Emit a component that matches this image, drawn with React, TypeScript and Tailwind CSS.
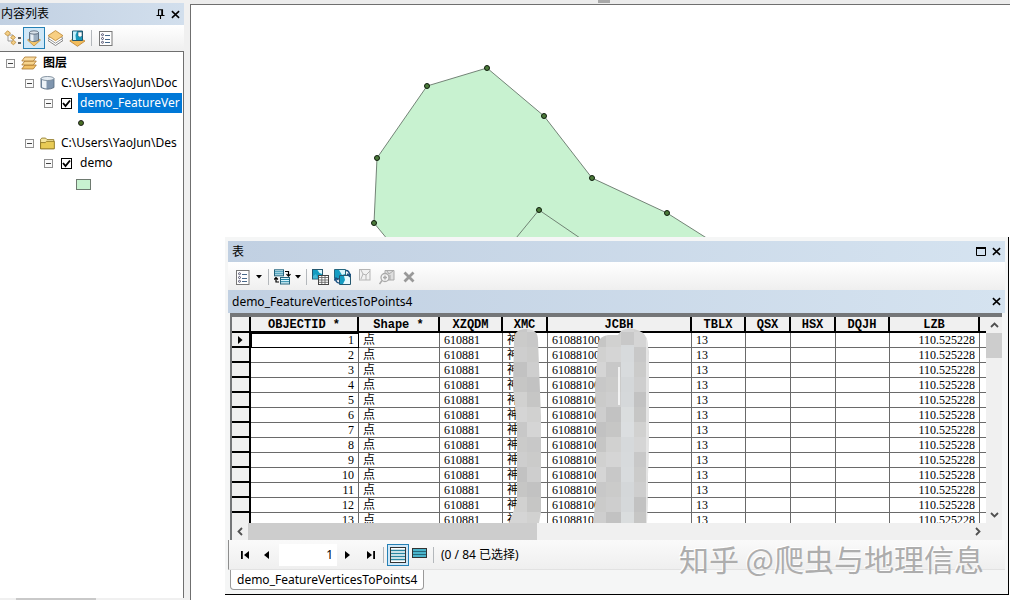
import { useState, type ReactNode } from "react";

const columns = [
  { key: "OBJECTID *", width: "w-[108px]" },
  { key: "Shape *", width: "w-[81px]" },
  { key: "XZQDM", width: "w-[63px]" },
  { key: "XMC", width: "w-[45px]" },
  { key: "JCBH", width: "w-[144px]" },
  { key: "TBLX", width: "w-[54px]" },
  { key: "QSX", width: "w-[45px]" },
  { key: "HSX", width: "w-[45px]" },
  { key: "DQJH", width: "w-[54px]" },
  { key: "LZB", width: "w-[90px]" },
];

const rows = Array.from({ length: 13 }, (_, i) => ({
  id: i + 1,
  shape: "点",
  xzqdm: "610881",
  xmc: "神",
  jcbh: "61088100",
  tblx: "13",
  lzb: "110.525228",
}));

const vertices = [
  [374, 223],
  [377, 158],
  [427, 86],
  [487, 68],
  [544, 116],
  [592, 178],
  [667, 213],
  [539, 210],
];

const cell = "border-r border-b border-[#6a6a6a] px-1 pt-px";

function Divider() {
  return <span className="h-4 w-px shrink-0 bg-[#b4b8bc]" />;
}

function IconButton({ label, className = "", children }: { label: string; className?: string; children: ReactNode }) {
  return (
    <button aria-label={label} className={`flex shrink-0 items-center justify-center ${className}`}>
      {children}
    </button>
  );
}

function CloseIcon() {
  return (
    <svg width="9" height="9" viewBox="0 0 10 10" fill="none" stroke="#000" strokeWidth="1.7">
      <path d="M1 1.2l8 7.6M9 1.2L1 8.8" />
    </svg>
  );
}

function ListIcon() {
  return (
    <svg width="14" height="15" viewBox="0 0 14 15" fill="none">
      <rect x=".5" y=".5" width="12.5" height="14" fill="#fff" stroke="#777" />
      <circle cx="3.5" cy="3.7" r="1" stroke="#335" strokeWidth=".8" />
      <circle cx="3.5" cy="7.5" r="1" stroke="#335" strokeWidth=".8" />
      <circle cx="3.5" cy="11.3" r="1" stroke="#335" strokeWidth=".8" />
      <path d="M6 4.5h5M6 8.5h5M6 11.5h5" stroke="#47688a" />
    </svg>
  );
}

function DrawingOrderIcon() {
  return (
    <svg width="17" height="16" viewBox="0 0 17 16" fill="none">
      <path d="M4 5v6h4M5 5h4v8" stroke="#999" />
      <path d="M3.5.8l3 2.2-2.7 3L.8 3.7z" fill="#f4cf86" stroke="#c79a4c" />
      <path d="M9 5.3l2.4 2-2.2 2.4-2.6-2z" fill="#f4cf86" stroke="#c79a4c" />
      <path d="M9.5 10.3l2.4 2-2.4 2.5-2.6-2.2z" fill="#f4cf86" stroke="#c79a4c" />
      <path d="M14 8h3M14 13h3" stroke="#333" strokeWidth="1.6" />
    </svg>
  );
}

function SourceIcon() {
  return (
    <svg width="16" height="17" viewBox="0 0 16 17">
      <path d="M1.5 10L8 16l6.5-6L11 8H5z" fill="#f3c66c" stroke="#c28d38" strokeWidth=".8" />
      <path d="M3.5 2.5v8q4.5 2.3 9 0v-8z" fill="#9baec0" stroke="#4d5c6e" strokeWidth=".8" />
      <path d="M4.5 3v7.5q1.5.7 3 .8V3z" fill="#e9f0f6" />
      <ellipse cx="8" cy="2.5" rx="4.5" ry="1.7" fill="#d9e2ea" stroke="#4d5c6e" strokeWidth=".8" />
    </svg>
  );
}

function VisibilityIcon() {
  return (
    <svg width="17" height="16" viewBox="0 0 17 16" strokeWidth=".9">
      <path d="M1 10.500L8.500 5l7.500 5.500-7.500 5z" fill="#fff" stroke="#777" />
      <path d="M1 8.200L8.500 3l7.500 5.200-7.500 5z" fill="#fff" stroke="#8c8c8c" />
      <path d="M1 5.700L8.500.6l7.500 5.100-7.500 5z" fill="#f8cf82" stroke="#c08d3e" />
    </svg>
  );
}

function SelectionIcon() {
  return (
    <svg width="17" height="17" viewBox="0 0 17 17">
      <path d="M.8 11L8.500 16.300 16 11l-5-2.500H5z" fill="#f3bd5c" stroke="#bf893a" strokeWidth=".9" />
      <path d="M3.500 1h10v9.500h-10z" fill="#1699bd" stroke="#24576f" />
      <path d="M4 1.500h4L6.500 5 7 10H4z" fill="#c7f0fb" />
      <path d="M9 2h4v3.500l-2 2-2-2z" fill="#fff" stroke="#24576f" strokeWidth=".6" />
    </svg>
  );
}

function LayersIcon() {
  return (
    <svg width="16" height="14" viewBox="0 0 16 14" strokeWidth=".8" stroke="#a9762d">
      <path d="M.8 13l3-4h11.500l-3 4z" fill="#f2c269" />
      <path d="M.8 9l3-4h11.500l-3 4z" fill="#f7d48d" />
      <path d="M.8 5l3-4h11.500l-3 4z" fill="#fadca0" />
    </svg>
  );
}

function DatabaseIcon() {
  return (
    <svg width="15" height="14" viewBox="0 0 15 14">
      <path d="M1 2.500v9q6.500 3.400 13 0v-9z" fill="#7f95ae" stroke="#54677c" strokeWidth=".8" />
      <path d="M2 3v8.300q2 1 4.500 1.200V3z" fill="#edf3f8" />
      <ellipse cx="7.500" cy="2.500" rx="6.500" ry="2" fill="#e6edf3" stroke="#6c7d8e" strokeWidth=".8" />
    </svg>
  );
}

function FolderIcon() {
  return (
    <svg width="15" height="13" viewBox="0 0 16 13" stroke="#8c7422" strokeWidth=".9">
      <path d="M.6 12V2L2 .7h4L7.500 2.300h7.200V12z" fill="#f6e7a0" />
      <path d="M.6 12.200V5.500h5L7 4.200h8.300v8z" fill="#e8cb55" />
    </svg>
  );
}

function RelatedIcon() {
  return (
    <svg width="17" height="16" viewBox="0 0 17 16" fill="none">
      <rect x=".5" y=".8" width="9" height="6" fill="#d6f3fb" stroke="#24647d" />
      <path d="M1 2.800h8M1 4.800h8" stroke="#2385a5" />
      <rect x="6.500" y="8.500" width="9" height="6.500" fill="#d6f3fb" stroke="#24647d" />
      <path d="M7 10.500h8M7 12.700h8" stroke="#2385a5" />
      <path d="M11 2.500h3.500V7M12.500 5.200l2 2 2-2M5 13H2V9M.2 10.500L2 8.500l2 2" stroke="#000" strokeWidth="1.200" />
    </svg>
  );
}

function SelectByAttributesIcon() {
  return (
    <svg width="17" height="16" viewBox="0 0 17 16">
      <rect x=".5" y=".5" width="10" height="9.500" fill="#149bc0" stroke="#24576f" />
      <path d="M5.500 1H10v4L7.500 4z" fill="#d8f5fc" />
      <path d="M1 7l3-2 2 4.500H1z" fill="#45b8d6" />
      <rect x="6.500" y="6.500" width="10" height="9" fill="#fff" stroke="#444" />
      <path d="M7 8.500h9M7 11h9M7 13.300h9M9.800 7v8M13 7v8" stroke="#666" strokeWidth=".9" />
    </svg>
  );
}

function SwitchSelectionIcon() {
  return (
    <svg width="17" height="16" viewBox="0 0 17 16" fill="none">
      <path d="M.5.5h11v9H.5z" fill="#159cc2" stroke="#24647d" />
      <path d="M5 1h6v4L8 6z" fill="#d8f5fc" />
      <path d="M5.500 6.500h11v9h-11z" fill="#e6f9fd" stroke="#24576f" />
      <path d="M6 7h4l1 4-2 4H6z" fill="#159cc2" />
      <path d="M12 1.500q3.500 0 3.500 5M13 4.800l2.500 2.400 1.500-2.400M5.500 14Q1.500 14 2 9.500M.3 11.500L2 9l2.500 2" stroke="#174e80" strokeWidth="1.500" />
    </svg>
  );
}

function ClearSelectionIcon() {
  return (
    <svg width="12" height="12" viewBox="0 0 12 12" fill="none" stroke="#b5b5b5">
      <rect x=".5" y=".5" width="10.500" height="10.500" fill="#f2f2f2" />
      <path d="M2 1l2 4-2 5M4 5l3 1 4-4M7 6v5" />
    </svg>
  );
}

function ZoomSelectedIcon() {
  return (
    <svg width="16" height="15" viewBox="0 0 16 15" fill="none" stroke="#aaa">
      <path d="M6 .5h9V10H6z" fill="#dedede" />
      <path d="M8 1l2 3 4-3M11 5v5" />
      <circle cx="6" cy="7.500" r="4" fill="#f5f5f5" strokeWidth="1.300" />
      <path d="M4 7.500h4M6 5.500v4M3 10.500L.5 14" strokeWidth="1.500" />
    </svg>
  );
}

function DropArrow() {
  return (
    <svg width="6" height="4" viewBox="0 0 6 4">
      <path d="M0 0h6L3 3.500z" />
    </svg>
  );
}

function Expander() {
  return (
    <button aria-label="折叠" className="flex size-[9px] shrink-0 items-center justify-center border border-[#919191] bg-[#fafafa]">
      <span className="h-px w-[5px] bg-[#444]" />
    </button>
  );
}

function LayerCheckbox({ id }: { id: string }) {
  return (
    <span className="grid shrink-0 place-items-center">
      <input
        id={id}
        type="checkbox"
        defaultChecked
        className="peer col-start-1 row-start-1 size-[11px] appearance-none border border-black bg-white"
      />
      <svg width="9" height="9" viewBox="0 0 9 9" fill="none" className="pointer-events-none invisible col-start-1 row-start-1 peer-checked:visible">
        <path d="M1 4l2.500 3L8 1.500" stroke="#000" strokeWidth="1.900" />
      </svg>
    </span>
  );
}

function ContentsPanel() {
  return (
    <aside className="flex w-[184px] shrink-0 flex-col pt-[3px]">
      <header className="flex h-[22px] shrink-0 items-center bg-linear-to-r from-[#c1d0e2] to-[#d2dfed] pr-1 pl-px">
        <h2 className="flex-1 text-xs">内容列表</h2>
        <IconButton label="自动隐藏" className="mr-1.5">
          <svg width="9" height="10" viewBox="0 0 9 10" fill="none" stroke="#000">
            <path d="M2.500 6V.8h4V6M5.800 1v5M.5 6.500h8M4.500 6.500V10" strokeWidth="1.100" />
          </svg>
        </IconButton>
        <IconButton label="关闭">
          <CloseIcon />
        </IconButton>
      </header>
      <div className="flex h-[26px] shrink-0 items-center bg-linear-to-b from-white to-[#efefef] pl-1">
        <IconButton label="按绘制顺序列出">
          <DrawingOrderIcon />
        </IconButton>
        <IconButton label="按源列出" className="ml-0.5 size-[22px] border border-[#2580b5] bg-[#d0e8f8]">
          <SourceIcon />
        </IconButton>
        <IconButton label="按可见性列出" className="ml-0.5">
          <VisibilityIcon />
        </IconButton>
        <IconButton label="按选择列出" className="mx-[5px]">
          <SelectionIcon />
        </IconButton>
        <Divider />
        <IconButton label="选项" className="ml-[7px]">
          <ListIcon />
        </IconButton>
      </div>
      <div className="flex-1 overflow-hidden border-t border-r border-[#6f6f6f] bg-white pt-px pr-px whitespace-nowrap">
        <div className="flex h-5 items-center gap-1.5 pl-1.5">
          <Expander />
          <LayersIcon />
          <span className="text-xs font-bold">图层</span>
        </div>
        <div className="flex h-5 items-center gap-1.5 pl-[25px]">
          <Expander />
          <span className="shrink-0">
            <DatabaseIcon />
          </span>
          <span>C:\Users\YaoJun\Doc</span>
        </div>
        <div className="flex h-5 items-center pl-11">
          <Expander />
          <span className="ml-2 flex">
            <LayerCheckbox id="layer-points" />
          </span>
          <label htmlFor="layer-points" className="ml-1.5 flex-1 bg-[#0078d7] pl-0.5 leading-5 text-white">
            demo_FeatureVer
          </label>
        </div>
        <div className="flex h-5 items-center pl-[78px]">
          <svg width="6" height="6" viewBox="0 0 6 6">
            <circle cx="3" cy="3" r="2.500" fill="#4a7026" stroke="#111" strokeWidth=".9" />
          </svg>
        </div>
        <div className="flex h-5 items-center gap-1.5 pl-[25px]">
          <Expander />
          <span className="shrink-0">
            <FolderIcon />
          </span>
          <span>C:\Users\YaoJun\Des</span>
        </div>
        <div className="flex h-5 items-center pl-11">
          <Expander />
          <span className="ml-2 flex">
            <LayerCheckbox id="layer-demo" />
          </span>
          <label htmlFor="layer-demo" className="ml-2">
            demo
          </label>
        </div>
        <div className="flex h-[22px] items-center pl-[76px]">
          <span className="h-[11px] w-[15px] border border-[#6e7a70] bg-[#c8f2d0]" />
        </div>
      </div>
      <div className="h-0.5 shrink-0 bg-[#f0f0f0] px-4">
        <div className="h-full w-20 bg-[#c9c9c9]" />
      </div>
    </aside>
  );
}

function MapView() {
  return (
    <svg width="819" height="595" viewBox="191 5 819 595" className="block">
      <path
        d="M520 400L374 223 377 158 427 86 487 68 544 116 592 178 667 213 800 297V400z"
        fill="#c8f2d0"
        stroke="#66766a"
        strokeWidth=".9"
      />
      <path d="M480 282L539 210 640 279" fill="none" stroke="#66766a" strokeWidth=".9" />
      {vertices.map(([x, y]) => (
        <circle key={`${x}-${y}`} cx={x} cy={y} r="2.500" fill="#4c7a3a" stroke="#0e1c0c" />
      ))}
    </svg>
  );
}

// pixelated strokes laid over the private columns
function Mosaic() {
  const shades = ["#c8c8c8", "#d1d1d0", "#c2c2c2", "#cbcbca", "#d5d5d5", "#c6c6c5", "#cecece"];
  const tile = (x: number, w: number, shift: number) =>
    Array.from({ length: 14 }, (_, i) => (
      <rect key={`${x}-${i}`} x={x} y={i * 15} width={w} height="15" fill={shades[(i * 3 + shift) % 7]} />
    ));
  return (
    <svg width="440" height="206" viewBox="0 0 440 206" className="pointer-events-none absolute top-0 left-0">
      <defs>
        <clipPath id="mosaic-name">
          <path d="M282 23Q282 12 294 12T306 23L309 100V195L307 206H277L285 185V110L281 70z" />
        </clipPath>
        <clipPath id="mosaic-code">
          <path d="M363 70L366 26Q368 19 376 18H386Q390 10 402 12 412 14 415 22L417 38V110L415 206H361L364 180V110z" />
        </clipPath>
      </defs>
      <g clipPath="url(#mosaic-name)">
        {tile(276, 19, 0)}
        {tile(295, 15, 4)}
      </g>
      <g clipPath="url(#mosaic-code)">
        {tile(360, 14, 2)}
        {tile(374, 15, 5)}
        {tile(389, 13, 4)}
        {tile(402, 16, 1)}
        <rect x="389" y="28" width="13" height="178" fill="#e0e4e8" opacity=".6" />
        <rect x="414" y="10" width="4" height="196" fill="#e4e4e4" />
      </g>
      <path d="M387 50V88" stroke="#fff" strokeWidth="1.500" />
    </svg>
  );
}

function AttributeGrid() {
  return (
    <div className="mr-[3px] ml-0.5 flex min-h-0 flex-1 flex-col border-t-4 border-l-2 border-[#747678] bg-[#f0f0f0]">
      <div className="flex min-h-0 flex-1">
        <div className="relative min-w-0 flex-1 overflow-hidden bg-white">
          <table className="w-full table-fixed border-separate border-spacing-0 font-['Liberation_Serif','Noto_Sans_CJK_SC',serif] text-xs leading-[13px] whitespace-nowrap">
            <colgroup>
              <col className="w-[19px]" />
              {columns.map((c) => (
                <col key={c.key} className={c.width} />
              ))}
              <col />
            </colgroup>
            <thead>
              <tr className="h-4 bg-[#f0f0f0] font-['Liberation_Mono',monospace] leading-3">
                <th aria-label="行" className="border-r-2 border-b-2 border-black p-0" />
                {columns.map((c) => (
                  <th key={c.key} className="border-r-2 border-b-2 border-black p-0 pt-0.5 text-center font-bold">
                    {c.key}
                  </th>
                ))}
                <th aria-label="更多" className="border-b-2 border-black p-0" />
              </tr>
            </thead>
            <tbody>
              {rows.map((r) => (
                <tr key={r.id} className="h-[15px]">
                  <th aria-label={`行 ${r.id}`} className="border-r-2 border-b-2 border-black bg-[#f0f0f0] p-0">
                    {r.id === 1 && (
                      <svg width="5" height="8" viewBox="0 0 5 8" className="mx-auto">
                        <path d="M0 0l4.500 4L0 8z" />
                      </svg>
                    )}
                  </th>
                  <td className={`${cell} text-right ${r.id === 1 ? "outline -outline-offset-1 outline-black" : ""}`}>{r.id}</td>
                  <td className={cell}>{r.shape}</td>
                  <td className={cell}>{r.xzqdm}</td>
                  <td className={cell}>{r.xmc}</td>
                  <td className={cell}>{r.jcbh}</td>
                  <td className={cell}>{r.tblx}</td>
                  <td className={cell} />
                  <td className={cell} />
                  <td className={cell} />
                  <td className={`${cell} text-right`}>{r.lzb}</td>
                  <td className="border-b border-[#6a6a6a] p-0" />
                </tr>
              ))}
            </tbody>
          </table>
          <Mosaic />
        </div>
        <div className="flex w-4 shrink-0 flex-col items-center">
          <IconButton label="向上滚动" className="h-4 w-full">
            <svg width="9" height="6" viewBox="0 0 9 6" fill="none" stroke="#505050" strokeWidth="1.800">
              <path d="M1 5l3.500-3.500L8 5" />
            </svg>
          </IconButton>
          <div className="h-[25px] w-full bg-[#cdcdcd]" />
          <IconButton label="向下滚动" className="mt-auto h-4 w-full">
            <svg width="9" height="6" viewBox="0 0 9 6" fill="none" stroke="#505050" strokeWidth="1.800">
              <path d="M1 1l3.500 3.500L8 1" />
            </svg>
          </IconButton>
        </div>
      </div>
      <div className="flex h-[17px] shrink-0 items-center pr-4">
        <IconButton label="向左滚动" className="size-4">
          <svg width="6" height="9" viewBox="0 0 6 9" fill="none" stroke="#505050" strokeWidth="1.800">
            <path d="M5 1L1.500 4.500 5 8" />
          </svg>
        </IconButton>
        <div className="h-full w-[289px] bg-[#cdcdcd]" />
        <IconButton label="向右滚动" className="ml-auto size-4">
          <svg width="6" height="9" viewBox="0 0 6 9" fill="none" stroke="#505050" strokeWidth="1.800">
            <path d="M1 1l3.500 3.500L1 8" />
          </svg>
        </IconButton>
      </div>
    </div>
  );
}

function RecordBar() {
  const [record, setRecord] = useState("1");

  return (
    <div className="flex h-[30px] shrink-0 items-center border-b border-l border-b-[#e2e2e2] border-l-[#8d8d8d] bg-linear-to-b from-[#fafafa] to-[#efefef] pl-3">
      <IconButton label="第一条">
        <svg width="9" height="8" viewBox="0 0 9 8">
          <path d="M0 0h1.800v8H0zM8 0v8L3 4z" />
        </svg>
      </IconButton>
      <IconButton label="上一条" className="ml-3.5">
        <svg width="5" height="8" viewBox="0 0 5 8">
          <path d="M5 0v8L0 4z" />
        </svg>
      </IconButton>
      <input
        aria-label="当前记录"
        value={record}
        onChange={(e) => setRecord(e.target.value)}
        className="ml-2.5 h-[22px] w-[58px] bg-white pr-1 text-right"
      />
      <IconButton label="下一条" className="ml-2">
        <svg width="5" height="8" viewBox="0 0 5 8">
          <path d="M0 0v8l5-4z" />
        </svg>
      </IconButton>
      <IconButton label="最后一条" className="mr-2 ml-4">
        <svg width="9" height="8" viewBox="0 0 9 8">
          <path d="M1 0v8l5-4zM7.200 0H9v8H7.200z" />
        </svg>
      </IconButton>
      <Divider />
      <IconButton label="显示所有记录" className="ml-[3px] size-[22px] border border-[#2580b5] bg-[#d0e8f8]">
        <svg width="16" height="16" viewBox="0 0 16 16">
          <rect x=".5" y=".5" width="15" height="15" fill="#fff" stroke="#333" />
          <path d="M1 3.500h14M1 6.500h14M1 9.500h14M1 12.500h14" stroke="#2a86a0" strokeWidth="1.600" />
        </svg>
      </IconButton>
      <IconButton label="显示所选记录" className="mr-1.5 mb-1 ml-[3px]">
        <svg width="15" height="10" viewBox="0 0 15 10">
          <rect x=".5" y=".5" width="14" height="9" fill="#4bb4cb" stroke="#333" />
          <path d="M1 3.500h13M1 6.500h13" stroke="#26687a" />
        </svg>
      </IconButton>
      <Divider />
      <span className="ml-[7px] whitespace-nowrap">(0 / 84 已选择)</span>
    </div>
  );
}

function TableWindow() {
  return (
    <section className="absolute top-[237px] right-px bottom-[5px] left-[225px] flex flex-col border-r border-b border-black bg-[#f5f6f6] pt-1 pr-[3px] pl-[3px]">
      <header className="flex h-[21px] shrink-0 items-center bg-linear-to-r from-[#c1d0e2] to-[#d5e3f0] pr-1 pl-1">
        <h1 className="flex-1 text-xs">表</h1>
        <IconButton label="最大化" className="mr-1.5">
          <svg width="10" height="9" viewBox="0 0 10 9" fill="none" stroke="#000">
            <path d="M.5 1h9v7.500h-9z" />
            <path d="M0 1h10" strokeWidth="2" />
          </svg>
        </IconButton>
        <IconButton label="关闭">
          <CloseIcon />
        </IconButton>
      </header>
      <div className="flex h-7 shrink-0 items-center bg-linear-to-b from-white to-[#efefef] pt-0.5 pl-2">
        <IconButton label="表选项" className="mr-1.5 gap-1.5">
          <ListIcon />
          <DropArrow />
        </IconButton>
        <Divider />
        <IconButton label="关联表" className="mr-[5px] ml-[5px] gap-1">
          <RelatedIcon />
          <DropArrow />
        </IconButton>
        <Divider />
        <IconButton label="按属性选择" className="ml-[5px]">
          <SelectByAttributesIcon />
        </IconButton>
        <IconButton label="切换选择" className="ml-[5px]">
          <SwitchSelectionIcon />
        </IconButton>
        <IconButton label="清除选择" className="mb-1 ml-2">
          <ClearSelectionIcon />
        </IconButton>
        <IconButton label="缩放至所选项" className="ml-2">
          <ZoomSelectedIcon />
        </IconButton>
        <IconButton label="删除所选项" className="ml-2">
          <svg width="12" height="12" viewBox="0 0 12 12" stroke="#999" strokeWidth="2.800">
            <path d="M1.500 1.500l9 9M10.500 1.500l-9 9" />
          </svg>
        </IconButton>
      </div>
      <div className="flex h-[23px] shrink-0 items-center bg-linear-to-r from-[#c1d0e2] to-[#d5e3f0] px-1">
        <h2 className="flex-1">demo_FeatureVerticesToPoints4</h2>
        <IconButton label="关闭表">
          <CloseIcon />
        </IconButton>
      </div>
      <AttributeGrid />
      <RecordBar />
      <div className="flex h-6 shrink-0 items-start pl-0.5">
        <button className="h-5 rounded-b border border-t-0 border-[#9a9a9a] bg-white px-1.5 leading-[18px]">
          demo_FeatureVerticesToPoints4
        </button>
      </div>
      <p className="pointer-events-none absolute right-6 bottom-4 font-['Noto_Sans_CJK_SC',sans-serif] text-[30px] leading-10 whitespace-nowrap text-[#adadad] [text-shadow:-1px_-1px_0_#fff]">
        知乎 @爬虫与地理信息
      </p>
    </section>
  );
}

export default function App() {
  return (
    <div className="relative flex h-screen overflow-hidden bg-[#f0f0f0] font-['Noto_Sans','Noto_Sans_CJK_SC',sans-serif] text-xs text-black">
      <ContentsPanel />
      <main className="ml-1.5 flex min-w-0 flex-1 flex-col">
        <div className="flex h-1 shrink-0 justify-center bg-[#ececec] pl-2">
          <span className="h-[3px] w-3 bg-[#a8a8a8]" />
        </div>
        <div className="min-h-0 flex-1 overflow-hidden border-t border-l border-[#6f6f6f] bg-white">
          <MapView />
        </div>
      </main>
      <TableWindow />
    </div>
  );
}
